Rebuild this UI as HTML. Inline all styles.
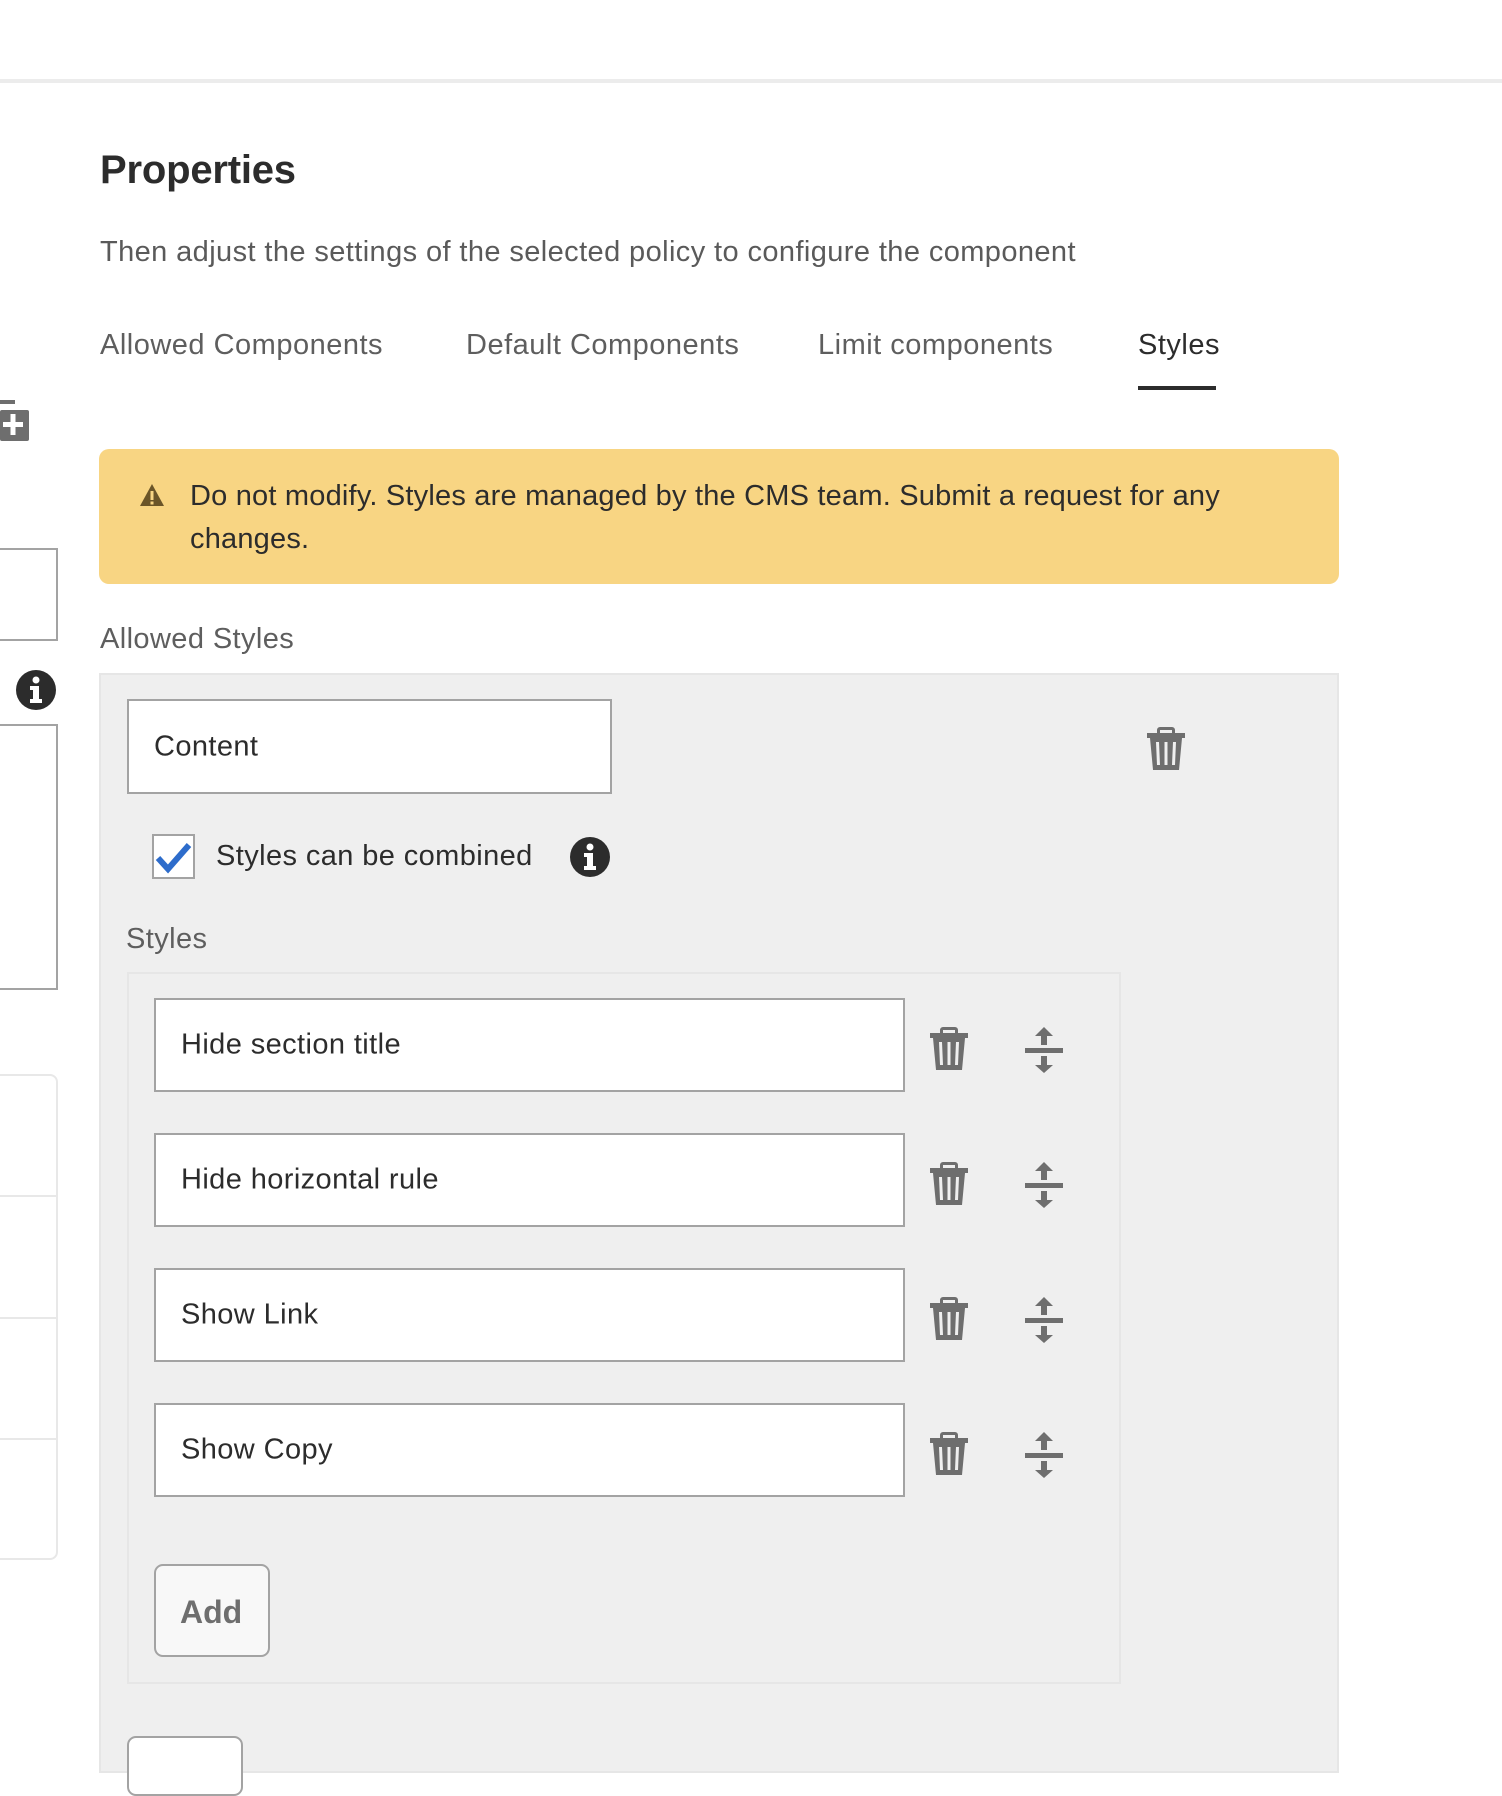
<!DOCTYPE html>
<html><head><meta charset="utf-8"><style>
*{margin:0;padding:0;box-sizing:border-box}
body{width:1502px;height:1760px;background:#fff;position:relative;overflow:hidden;font-family:"Liberation Sans",sans-serif;color:#2c2c2c}
.a{position:absolute}
.t{position:absolute;white-space:nowrap;line-height:1}
.inp{position:absolute;background:#fff;border:2px solid #a3a3a3}
.inp span{position:absolute;left:25px;top:50%;transform:translateY(-50%);font-size:29px;color:#2c2c2c;white-space:nowrap;letter-spacing:0.4px}
</style></head><body>
<div class="a" style="left:0;top:79px;width:1502px;height:4px;background:#ececec"></div>
<div class="t" style="left:100px;top:150px;font-size:40px;font-weight:bold;color:#2c2c2c;letter-spacing:-0.2px">Properties</div>
<div class="t" style="left:100px;top:238px;font-size:29px;color:#5a5a5a;letter-spacing:0.4px">Then adjust the settings of the selected policy to configure the component</div>
<div class="t" style="left:100px;top:331px;font-size:29px;color:#5e5e5e;letter-spacing:0.5px">Allowed Components</div>
<div class="t" style="left:466px;top:331px;font-size:29px;color:#5e5e5e;letter-spacing:0.5px">Default Components</div>
<div class="t" style="left:818px;top:331px;font-size:29px;color:#5e5e5e;letter-spacing:0.5px">Limit components</div>
<div class="t" style="left:1138px;top:331px;font-size:29px;color:#2c2c2c;letter-spacing:0.5px">Styles</div>
<div class="a" style="left:1138px;top:386px;width:78px;height:4px;background:#2c2c2c"></div>

<!-- left side -->
<svg class="a" style="left:0;top:400px" width="30" height="42"><rect x="0" y="0" width="15" height="4" fill="#6e6e6e"/><rect x="0" y="10" width="29" height="31" rx="2" fill="#6e6e6e"/><rect x="3" y="22" width="20" height="5" fill="#fff"/><rect x="10.5" y="14" width="5" height="21" fill="#fff"/></svg>
<div class="a" style="left:-4px;top:548px;width:62px;height:93px;border:2px solid #a3a3a3"></div>
<svg class="a" style="left:16px;top:670px" width="40" height="40"><circle cx="20" cy="20" r="20" fill="#2c2c2c"/><circle cx="20" cy="10" r="3.5" fill="#fff"/><path d="M14 16h9v13h3v4H14v-4h3v-9h-3z" fill="#fff"/></svg>
<div class="a" style="left:-4px;top:724px;width:62px;height:266px;border:2px solid #a3a3a3"></div>
<div class="a" style="left:-10px;top:1074px;width:68px;height:486px;border:2px solid #e8e8e8;border-radius:8px"></div>
<div class="a" style="left:0;top:1195px;width:57px;height:2px;background:#e8e8e8"></div>
<div class="a" style="left:0;top:1317px;width:57px;height:2px;background:#e8e8e8"></div>
<div class="a" style="left:0;top:1438px;width:57px;height:2px;background:#e8e8e8"></div>

<!-- alert -->
<div class="a" style="left:99px;top:449px;width:1240px;height:135px;background:#f8d583;border-radius:10px"></div>
<svg class="a" style="left:139px;top:483px" width="26" height="24"><path d="M13 1L25 23H1z" fill="#6b5528"/><rect x="11.5" y="8" width="3" height="9" fill="#f8d583"/><rect x="11.5" y="18.5" width="3" height="3" fill="#f8d583"/></svg>
<div class="t" style="left:190px;top:482px;font-size:29px;color:#2c2c2c;letter-spacing:0.2px">Do not modify. Styles are managed by the CMS team. Submit a request for any</div>
<div class="t" style="left:190px;top:525px;font-size:29px;color:#2c2c2c;letter-spacing:0.2px">changes.</div>

<div class="t" style="left:100px;top:625px;font-size:29px;color:#5e5e5e;letter-spacing:0.4px">Allowed Styles</div>

<!-- outer panel -->
<div class="a" style="left:99px;top:673px;width:1240px;height:1100px;background:#efefef;border:2px solid #e6e6e6"></div>
<div class="inp" style="left:127px;top:699px;width:485px;height:95px"><span>Content</span></div>
<svg class="a" style="left:1147px;top:727px" width="38" height="43"><rect x="11.5" y="1.5" width="15" height="6" rx="1.5" fill="none" stroke="#6e6e6e" stroke-width="3"/><rect x="0" y="6" width="38" height="5" fill="#6e6e6e"/><path d="M3 11h32l-3 32H6z" fill="#6e6e6e"/><path d="M9 15h3l1 23h-3zM17.5 15h3v23h-3zM26 15h3l-1 23h-3z" fill="#efefef"/></svg>
<div class="a" style="left:152px;top:834px;width:43px;height:45px;background:#fff;border:2px solid #a3a3a3"></div>
<svg class="a" style="left:155px;top:840px" width="38" height="34"><path d="M3 18l10 11L34 5" fill="none" stroke="#2d6ccb" stroke-width="6"/></svg>
<div class="t" style="left:216px;top:842px;font-size:29px;color:#2c2c2c;letter-spacing:0.4px">Styles can be combined</div>
<svg class="a" style="left:570px;top:837px" width="40" height="40"><circle cx="20" cy="20" r="20" fill="#2c2c2c"/><circle cx="20" cy="10" r="3.5" fill="#fff"/><path d="M14 16h9v13h3v4H14v-4h3v-9h-3z" fill="#fff"/></svg>
<div class="t" style="left:126px;top:925px;font-size:29px;color:#5e5e5e;letter-spacing:0.4px">Styles</div>

<!-- inner panel -->
<div class="a" style="left:127px;top:972px;width:994px;height:712px;background:#efefef;border:2px solid #e6e6e6"></div>

<div class="inp" style="left:154px;top:998px;width:751px;height:94px"><span>Hide section title</span></div>
<div class="inp" style="left:154px;top:1133px;width:751px;height:94px"><span>Hide horizontal rule</span></div>
<div class="inp" style="left:154px;top:1268px;width:751px;height:94px"><span>Show Link</span></div>
<div class="inp" style="left:154px;top:1403px;width:751px;height:94px"><span>Show Copy</span></div>

<svg width="0" height="0" style="position:absolute"><defs>
<g id="tr"><rect x="11.5" y="1.5" width="15" height="6" rx="1.5" fill="none" stroke="#6e6e6e" stroke-width="3"/><rect x="0" y="6" width="38" height="5" fill="#6e6e6e"/><path d="M3 11h32l-3 32H6z" fill="#6e6e6e"/><path d="M9 15h3l1 23h-3zM17.5 15h3v23h-3zM26 15h3l-1 23h-3z" fill="#efefef"/></g>
<g id="mv"><path d="M19 0L28 9H22V18H16V9H10z" fill="#6e6e6e"/><rect x="0" y="21" width="38" height="5" fill="#6e6e6e"/><path d="M16 29H22V38H28L19 46L10 38H16z" fill="#6e6e6e"/></g>
</defs></svg>
<svg class="a" style="left:930px;top:1027px" width="38" height="43"><use href="#tr"/></svg>
<svg class="a" style="left:1025px;top:1027px" width="38" height="46"><use href="#mv"/></svg>
<svg class="a" style="left:930px;top:1162px" width="38" height="43"><use href="#tr"/></svg>
<svg class="a" style="left:1025px;top:1162px" width="38" height="46"><use href="#mv"/></svg>
<svg class="a" style="left:930px;top:1297px" width="38" height="43"><use href="#tr"/></svg>
<svg class="a" style="left:1025px;top:1297px" width="38" height="46"><use href="#mv"/></svg>
<svg class="a" style="left:930px;top:1432px" width="38" height="43"><use href="#tr"/></svg>
<svg class="a" style="left:1025px;top:1432px" width="38" height="46"><use href="#mv"/></svg>

<div class="a" style="left:154px;top:1564px;width:116px;height:93px;background:#f8f8f8;border:2px solid #a3a3a3;border-radius:9px"></div>
<div class="t" style="left:180px;top:1596px;font-size:32px;font-weight:bold;color:#6e6e6e">Add</div>

<div class="a" style="left:127px;top:1736px;width:116px;height:60px;background:#fff;border:2px solid #a3a3a3;border-radius:9px"></div>
</body></html>
